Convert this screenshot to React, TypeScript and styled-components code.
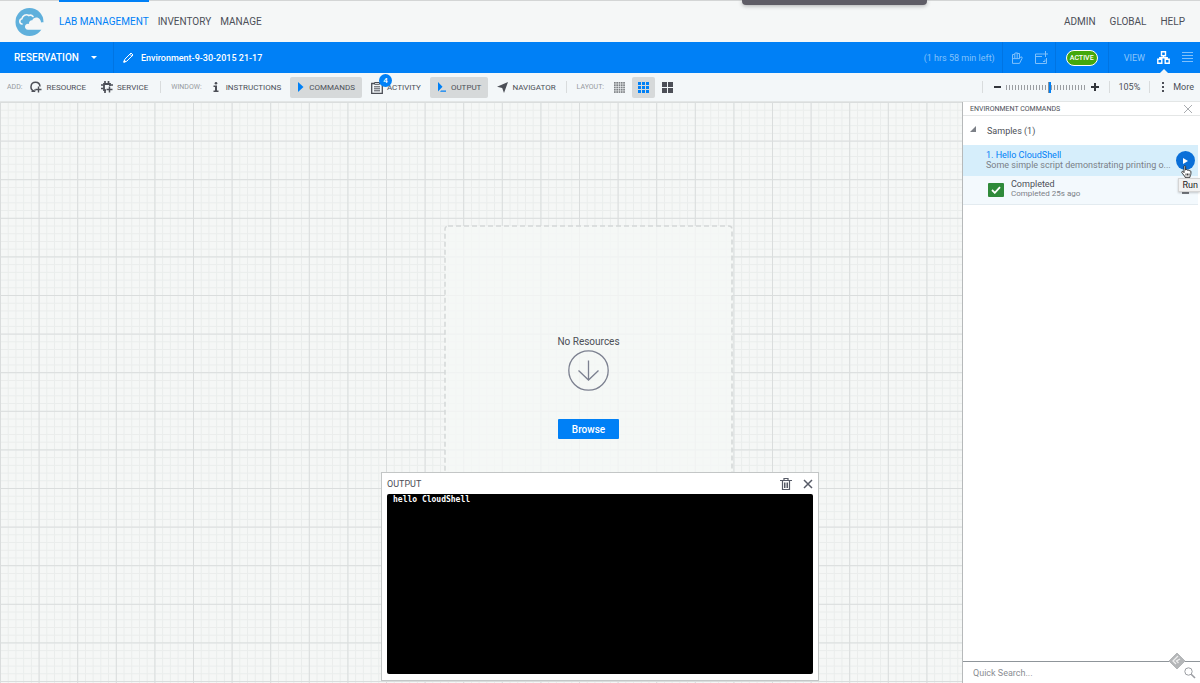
import React from "react";
import styled, { createGlobalStyle, css } from "styled-components";

const BLUE = "#0080f6";
const INK = "#4c4f57";
const SANS = `Roboto, "Liberation Sans", sans-serif`;

const GlobalStyle = createGlobalStyle`
  *, *::before, *::after { box-sizing: border-box; }
  html, body, #root { height: 100%; }
  body {
    margin: 0;
    font-family: ${SANS};
    font-size: 9px;
    color: ${INK};
    background: #f4f6f6;
    overflow: hidden;
  }
  button, input { font: inherit; color: inherit; }
  button { border: 0; background: none; padding: 0; cursor: pointer; }
  a { color: inherit; text-decoration: none; }
  svg { display: block; flex: none; }
`;

const Page = styled.div`
  display: flex;
  flex-direction: column;
  height: 100vh;
  position: relative;
`;

const ScreenNotch = styled.div`
  position: absolute;
  top: 0;
  left: 742px;
  width: 185px;
  height: 5px;
  background: #5f5d66;
  border-radius: 0 0 4px 4px;
  box-shadow: 0 1px 4px rgba(0, 0, 0, 0.3);
`;

const Header = styled.header`
  display: flex;
  align-items: stretch;
  flex: none;
  height: 42px;
  padding: 0 15px;
  background: #f5f7f7;
  border-top: 1px solid #d3d5d5;
`;

const Logo = styled.a`
  display: flex;
  align-items: center;
  margin-right: 15px;
`;

const HeaderNav = styled.nav<{ $end?: boolean }>`
  display: flex;
  gap: ${(p) => (p.$end ? 14 : 9)}px;
  margin-left: ${(p) => (p.$end ? "auto" : 0)};
`;

const HeaderLink = styled.a<{ $active?: boolean }>`
  display: flex;
  align-items: center;
  font-size: 10px;
  color: ${(p) => (p.$active ? BLUE : INK)};
  box-shadow: ${(p) => (p.$active ? `0 -1px 0 ${BLUE}, inset 0 1px 0 ${BLUE}` : "none")};
`;

const ReservationBar = styled.div`
  display: flex;
  align-items: stretch;
  flex: none;
  height: 31px;
  color: #fff;
  background: ${BLUE};
`;

const BarCell = styled.div<{ $gap?: number; $pad: string; $last?: boolean }>`
  display: flex;
  align-items: center;
  gap: ${(p) => p.$gap ?? 0}px;
  padding: ${(p) => p.$pad};
  border-right: ${(p) => (p.$last ? "0" : "1px solid #0074e2")};
`;

const ReservationMenu = styled.button`
  display: flex;
  align-items: center;
  gap: 12px;
  font-size: 10px;
  font-weight: 500;
`;

const EnvironmentName = styled.h1`
  margin: 0;
  font-size: 9px;
  font-weight: 500;
`;

const TimeLeft = styled.span`
  font-size: 9px;
  color: #84c2fb;
`;

const Spacer = styled.div`
  flex: 1;
`;

const StatusPill = styled.span`
  display: flex;
  align-items: center;
  justify-content: center;
  width: 32px;
  height: 16px;
  border: 1px solid #fff;
  border-radius: 8px;
  background: #44a80c;
  font-size: 7px;
  font-weight: 500;
`;

const ViewLabel = styled.span`
  color: #8cc6fb;
`;

const BarButton = styled.button<{ $dim?: boolean; $current?: boolean }>`
  display: flex;
  align-items: center;
  align-self: stretch;
  position: relative;
  color: ${(p) => (p.$dim ? "#7fc0fb" : "#fff")};
  ${(p) =>
    p.$current &&
    css`
      &::after {
        content: "";
        position: absolute;
        bottom: 0;
        left: 50%;
        margin-left: -4px;
        border: 4px solid transparent;
        border-top: 0;
        border-bottom-color: #f3f7f9;
      }
    `}
`;

const Toolbar = styled.div`
  display: flex;
  align-items: center;
  flex: none;
  height: 29px;
  padding: 0 6px 0 7px;
  background: #f3f7f9;
  border-bottom: 1px solid #e3e6e6;
  white-space: nowrap;
`;

const GroupLabel = styled.span`
  font-size: 7px;
  color: #96999d;
`;

const Divider = styled.span<{ $before: number; $after: number }>`
  width: 1px;
  height: 12px;
  margin: 0 ${(p) => p.$after}px 0 ${(p) => p.$before}px;
  background: #d9dcdd;
`;

const ToolButton = styled.button<{ $pressed?: boolean; $gap?: number }>`
  display: flex;
  align-items: center;
  justify-content: center;
  gap: ${(p) => p.$gap ?? 4}px;
  position: relative;
  height: 21px;
  padding: 0 7px;
  border-radius: 2px;
  background: ${(p) => (p.$pressed ? "#d6d9da" : "transparent")};
  font-size: 8px;
`;

const ToolGroup = styled.div<{ $gap: number; $inset: number }>`
  display: flex;
  gap: ${(p) => p.$gap}px;
  margin-left: ${(p) => p.$inset}px;
`;

const LayoutButton = styled(ToolButton)`
  width: 23px;
  padding: 0;
`;

const Badge = styled.span`
  position: absolute;
  top: -3px;
  left: 15px;
  width: 13px;
  height: 13px;
  border-radius: 7px;
  background: ${BLUE};
  color: #fff;
  font-size: 8px;
  font-weight: 500;
  line-height: 13px;
  text-align: center;
`;

const ZoomGroup = styled.div`
  display: flex;
  align-items: center;
  gap: 5px;
`;

const ZoomSlider = styled.input`
  appearance: none;
  width: 80px;
  height: 11px;
  margin: 0;
  background: repeating-linear-gradient(90deg, #9a9da1 0 1px, transparent 1px 3px) 0 3px / 100% 5px no-repeat;
  &::-webkit-slider-thumb {
    appearance: none;
    width: 3px;
    height: 11px;
    background: ${BLUE};
    border-left: 1px solid #8b9299;
  }
`;

const ZoomValue = styled.output`
  font-size: 9px;
`;

const MoreButton = styled.button`
  display: flex;
  align-items: center;
  gap: 9px;
`;

const Workspace = styled.div`
  display: flex;
  flex: 1;
  min-height: 0;
`;

const Canvas = styled.main`
  position: relative;
  flex: 1;
  min-width: 0;
  overflow: hidden;
`;

const EmptyZone = styled.section`
  position: absolute;
  top: 123px;
  left: 444px;
  display: flex;
  flex-direction: column;
  align-items: center;
  width: 289px;
  height: 289px;
  padding-top: 111px;
`;

const EmptyOutline = styled.svg`
  position: absolute;
  inset: 0;
`;

const EmptyTitle = styled.p`
  position: relative;
  margin: 0 0 2px;
  font-size: 10px;
  line-height: 12px;
`;

const DropIcon = styled.svg`
  position: relative;
`;

const BrowseButton = styled.button`
  position: relative;
  width: 61px;
  height: 20px;
  margin-top: 28px;
  border-radius: 1px;
  background: ${BLUE};
  color: #fff;
  font-size: 10px;
  font-weight: 500;
`;

const OutputWindow = styled.section`
  position: absolute;
  bottom: 2px;
  left: 50%;
  display: flex;
  flex-direction: column;
  width: 438px;
  height: 209px;
  margin-left: -219px;
  padding: 0 5px 6px;
  border: 1px solid #c3c6c6;
  background: #fff;
`;

const OutputHeader = styled.header`
  display: flex;
  align-items: center;
  gap: 11px;
  flex: none;
  height: 21px;
`;

const OutputTitle = styled.h2`
  flex: 1;
  margin: 0;
  font-size: 9px;
  font-weight: 400;
`;

const IconButton = styled.button`
  display: flex;
  align-items: center;
  justify-content: center;
  color: #565a66;
`;

const Terminal = styled.pre`
  flex: 1;
  margin: 0;
  padding: 0 6px;
  border-radius: 2px;
  background: #000;
  color: #fff;
  font: bold 8px/11px "DejaVu Sans Mono", monospace;
`;

const SidePanel = styled.aside`
  display: flex;
  flex-direction: column;
  flex: none;
  width: 238px;
  border-left: 1px solid #b6b9ba;
  background: #fff;
`;

const PanelHeader = styled.header`
  display: flex;
  align-items: center;
  justify-content: space-between;
  height: 14px;
  padding: 0 7px;
  border-bottom: 1px solid #e4e6e6;
`;

const PanelTitle = styled.h2`
  margin: 0;
  font-size: 7px;
  font-weight: 400;
`;

const FolderToggle = styled.button`
  display: flex;
  align-items: center;
  gap: 10px;
  height: 29px;
  padding: 0 7px;
`;

const CommandRow = styled.div<{ $selected?: boolean }>`
  display: flex;
  align-items: center;
  position: relative;
  height: ${(p) => (p.$selected ? 31 : 29)}px;
  margin-right: 2px;
  padding: 0 3px 0 ${(p) => (p.$selected ? 23 : 25)}px;
  background: ${(p) => (p.$selected ? "#d6eefb" : "#f3f9fd")};
  border-bottom: ${(p) => (p.$selected ? "0" : "1px solid #e3ebf0")};
`;

const CommandText = styled.div`
  flex: 1;
  min-width: 0;
  padding-bottom: 2px;
  line-height: 10px;
  white-space: nowrap;
`;

const CommandName = styled.div<{ $link?: boolean }>`
  color: ${(p) => (p.$link ? BLUE : INK)};
`;

const CommandDetail = styled.div<{ $small?: boolean }>`
  font-size: ${(p) => (p.$small ? 8 : 9)}px;
  color: #7b8087;
`;

const CheckTile = styled.span`
  display: flex;
  align-items: center;
  justify-content: center;
  width: 16px;
  height: 14px;
  margin-right: 7px;
  border-radius: 1px;
  background: #2f8a3a;
`;

const RunButton = styled.button`
  display: flex;
  align-items: center;
  justify-content: center;
  flex: none;
  width: 19px;
  height: 19px;
  margin-left: 4px;
  border-radius: 50%;
  background: #0a6fd8;
`;

const Pointer = styled.span`
  position: absolute;
  top: 20px;
  right: 6px;
  z-index: 2;
`;

const Tooltip = styled.span`
  position: absolute;
  top: 33px;
  right: -2px;
  z-index: 1;
  padding: 0 2px 0 4px;
  border: 1px solid #d5d5d5;
  border-right: 0;
  background: #f2f2f2;
  box-shadow: 0 1px 2px rgba(0, 0, 0, 0.2);
  color: #222;
  font-size: 9px;
  line-height: 12px;
`;

const StopButton = styled.button`
  align-self: flex-end;
  width: 7px;
  height: 6px;
  margin: 0 6px 10px 0;
  background: #777b82;
`;

const SearchBar = styled.form`
  display: flex;
  align-items: center;
  position: relative;
  height: 22px;
  margin-top: auto;
  padding: 0 4px 0 10px;
  border-top: 1px solid #8f959a;
`;

const SearchInput = styled.input`
  flex: 1;
  min-width: 0;
  padding: 0;
  border: 0;
  outline: 0;
  background: none;
  &::placeholder {
    color: #8a8d92;
    opacity: 1;
  }
`;

const CornerMark = styled.span`
  position: absolute;
  top: -10px;
  right: 14px;
`;

const GRID_MAJOR = [0, 1, 2, 3, 4].map((n) => (n * 193) / 5);
const GRID_MINOR = Array.from({ length: 25 }, (_, n) => (n * 193) / 25);

function GridLines() {
  return (
    <svg width="100%" height="100%" aria-hidden="true">
      <defs>
        <pattern id="grid" width="193" height="193" patternUnits="userSpaceOnUse">
          {GRID_MINOR.map((v) => (
            <path key={v} d={`M${v + 0.5} 0V193M0 ${v + 0.5}H193`} stroke="#eaedec" strokeWidth="1" />
          ))}
          {GRID_MAJOR.map((v) => (
            <path key={v} d={`M${v + 0.5} 0V193M0 ${v + 0.5}H193`} stroke="#dadddd" strokeWidth="1" />
          ))}
        </pattern>
      </defs>
      <rect width="100%" height="100%" fill="#f5f7f6" />
      <rect width="100%" height="100%" fill="url(#grid)" />
    </svg>
  );
}

const LogoMark = () => (
  <svg width="29" height="28" viewBox="0 0 29 28">
    <circle cx="14.5" cy="14" r="14" fill="#5fb0dc" />
    <path d="M7 16C4.200 15.500 4 11.500 6.800 10.800C7.500 7.500 11 5.800 13.800 7.500C15.500 6.800 17 7.200 18 8.500" fill="none" stroke="#f5f7f7" strokeWidth="1.600" strokeLinecap="round" />
    <path d="M29 14.500V21.800H13C10.800 21.500 9.700 20 10 18.200C10.300 16.500 12 15.500 14 16C13.800 13 15.500 12 17.300 12.200C18.500 9 23 8.600 24.800 11.200C25.800 12.500 26 13.500 26 14.500C27.500 14 28.400 14 29 14.500Z" fill="#f5f7f7" />
  </svg>
);

const PencilIcon = () => (
  <svg width="11" height="11" viewBox="0 0 11 11" fill="none" stroke="#fff" strokeWidth="1">
    <path d="M1 10L1.800 7.200L8 1L10 3L3.800 9.200ZM6.800 2.200L8.800 4.200" />
    <path d="M.7 10.300L1.400 8.200L2.800 9.600Z" fill="#fff" />
  </svg>
);

const HandIcon = () => (
  <svg width="12" height="13" viewBox="0 0 12 13" fill="none" stroke="currentColor" strokeWidth="1">
    <path d="M1.500 12.400H8.500L11 7.500V6H9.500L8.500 7.500V2.500M1.500 12.400V3.500M3.800 7.500V2M6.200 7.500V1.500M1.500 7.600H8.500M1.500 3.500H3.500M4 2H6M6.200 2.500H8.500" />
  </svg>
);

const ExtendIcon = () => (
  <svg width="13" height="13" viewBox="0 0 13 13" fill="none" stroke="currentColor" strokeWidth="1">
    <path d="M7.500 3H.5V12.500H11.500V7M.5 5.500H7M10.500 0V6M7.500 3H13M8 10.500H10V8.500" />
  </svg>
);

const DiagramIcon = () => (
  <svg width="13" height="13" viewBox="0 0 13 13" fill="none" stroke="currentColor" strokeWidth="1.400">
    <path d="M4.500 .8H8.500V4.800H4.500ZM.8 8.200H4.800V12.200H.8ZM8.200 8.200H12.200V12.200H8.200ZM6.500 5V7M2.800 8V6.700H10.200V8" />
  </svg>
);

const ListIcon = () => (
  <svg width="11" height="11" viewBox="0 0 11 11" stroke="currentColor" strokeWidth="1">
    <path d="M0 .5H11M0 3.500H11M0 6.500H11M0 9.500H11" />
  </svg>
);

const ResourceIcon = () => (
  <svg width="12" height="12" viewBox="0 0 12 12" fill="none" stroke={INK}>
    <path d="M4.500 10.200A4.500 4.500 0 1 1 10 5.500" strokeWidth="1.500" />
    <path d="M1.500 10.500H5V8" strokeWidth="1" />
    <path d="M8.500 5.500V11.500M5.500 8.500H11.500" strokeWidth="1.400" />
  </svg>
);

const ServiceIcon = () => (
  <svg width="12" height="12" viewBox="0 0 12 12" fill="none" stroke={INK}>
    <path d="M5 9.200H3V3H9V5" strokeWidth="1.800" />
    <path d="M4 0V2.500M7.500 0V2.500M0 4H2.500M0 7.500H2.500M9.500 4H12M4 9V12" strokeWidth="1.700" />
    <path d="M8.500 5.500V11.500M5.500 8.500H11.500" strokeWidth="1.500" />
  </svg>
);

const InfoIcon = () => (
  <svg width="6" height="10" viewBox="0 0 6 10" fill={INK}>
    <circle cx="3" cy="1.300" r="1.300" />
    <path d="M.5 3.500H4V8.500H5.500V10H.5V8.500H2V5H.5Z" />
  </svg>
);

const PlayIcon = () => (
  <svg width="7" height="10" viewBox="0 0 7 10" fill={BLUE}>
    <path d="M1 0L6.500 5L1 10Z" />
  </svg>
);

const ActivityIcon = () => (
  <svg width="12" height="13" viewBox="0 0 12 13" fill="none" stroke={INK}>
    <path d="M3 2.500H.7V12.300H11.300V2.500H9" strokeWidth="1.300" />
    <path d="M3.500 3.300V1.500H8.500V3.300Z" />
    <path d="M3 5.800H9M3 7.800H9M3 9.800H9" />
  </svg>
);

const ConsoleIcon = () => (
  <svg width="9" height="10" viewBox="0 0 9 10" fill={BLUE}>
    <path d="M1 0L5.500 4.800L1 9.500ZM4 8.500H9V9.700H3Z" />
  </svg>
);

const NavigatorIcon = () => (
  <svg width="11" height="11" viewBox="0 0 11 11" fill={INK}>
    <path d="M11 0L7 11L5.200 6L0 4.800Z" />
  </svg>
);

function Squares({ count, size, step, color }: { count: number; size: number; step: number; color: string }) {
  const side = Math.ceil(step * (count - 1) + size);
  return (
    <svg width={side} height={side} fill={color}>
      {Array.from({ length: count * count }, (_, i) => (
        <rect key={i} x={(i % count) * step} y={Math.floor(i / count) * step} width={size} height={size} />
      ))}
    </svg>
  );
}

export default function App() {
  return (
    <>
      <GlobalStyle />
      <Page>
        <Header>
          <Logo href="#" aria-label="Home"><LogoMark /></Logo>
          <HeaderNav>
            <HeaderLink href="#" $active>LAB MANAGEMENT</HeaderLink>
            <HeaderLink href="#">INVENTORY</HeaderLink>
            <HeaderLink href="#">MANAGE</HeaderLink>
          </HeaderNav>
          <HeaderNav $end>
            <HeaderLink href="#">ADMIN</HeaderLink>
            <HeaderLink href="#">GLOBAL</HeaderLink>
            <HeaderLink href="#">HELP</HeaderLink>
          </HeaderNav>
        </Header>
        <ScreenNotch />

        <ReservationBar>
          <BarCell $pad="0 16px 0 14px">
            <ReservationMenu>
              RESERVATION
              <svg width="6" height="3" fill="#fff"><path d="M0 0H6L3 3Z" /></svg>
            </ReservationMenu>
          </BarCell>
          <BarCell $pad="0 9px" $gap={7} $last>
            <PencilIcon />
            <EnvironmentName>Environment-9-30-2015 21-17</EnvironmentName>
          </BarCell>
          <Spacer />
          <BarCell $pad="0 7px"><TimeLeft>(1 hrs 58 min left)</TimeLeft></BarCell>
          <BarCell $pad="0 7px 0 8px" $gap={12}>
            <BarButton $dim aria-label="Reserve"><HandIcon /></BarButton>
            <BarButton $dim aria-label="Extend"><ExtendIcon /></BarButton>
          </BarCell>
          <BarCell $pad="0 10px"><StatusPill>ACTIVE</StatusPill></BarCell>
          <BarCell $pad="0 7px 0 15px" $gap={12} $last>
            <ViewLabel>VIEW</ViewLabel>
            <BarButton $current aria-label="Diagram view"><DiagramIcon /></BarButton>
            <BarButton $dim aria-label="List view"><ListIcon /></BarButton>
          </BarCell>
        </ReservationBar>

        <Toolbar>
          <GroupLabel>ADD:</GroupLabel>
          <ToolGroup $gap={1} $inset={1}>
            <ToolButton><ResourceIcon />RESOURCE</ToolButton>
            <ToolButton><ServiceIcon />SERVICE</ToolButton>
          </ToolGroup>
          <Divider $before={5} $after={10} />
          <GroupLabel>WINDOW:</GroupLabel>
          <ToolGroup $gap={2} $inset={4}>
            <ToolButton $gap={7}><InfoIcon />INSTRUCTIONS</ToolButton>
            <ToolButton $gap={5} $pressed><PlayIcon />COMMANDS</ToolButton>
            <ToolButton><ActivityIcon />ACTIVITY<Badge>4</Badge></ToolButton>
            <ToolButton $gap={5} $pressed><ConsoleIcon />OUTPUT</ToolButton>
            <ToolButton><NavigatorIcon />NAVIGATOR</ToolButton>
          </ToolGroup>
          <Divider $before={3} $after={10} />
          <GroupLabel>LAYOUT:</GroupLabel>
          <ToolGroup $gap={1} $inset={4}>
            <LayoutButton aria-label="Small layout"><Squares count={5} size={1.7} step={2.3} color="#7d8084" /></LayoutButton>
            <LayoutButton $pressed aria-label="Medium layout"><Squares count={3} size={3} step={4} color={BLUE} /></LayoutButton>
            <LayoutButton aria-label="Large layout"><Squares count={2} size={5} step={6} color={INK} /></LayoutButton>
          </ToolGroup>
          <Spacer />
          <Divider $before={0} $after={11} />
          <ZoomGroup>
            <IconButton aria-label="Zoom out"><svg width="7" height="8" fill="#33363c"><path d="M0 3H7V5H0Z" /></svg></IconButton>
            <ZoomSlider type="range" min={0} max={200} defaultValue={108} aria-label="Zoom" />
            <IconButton aria-label="Zoom in"><svg width="8" height="8" fill="#33363c"><path d="M3 0H5V3H8V5H5V8H3V5H0V3H3Z" /></svg></IconButton>
          </ZoomGroup>
          <Divider $before={10} $after={8} />
          <ZoomValue>105%</ZoomValue>
          <Divider $before={9} $after={12} />
          <MoreButton>
            <svg width="2" height="10" fill={INK}><path d="M0 0H2V2H0ZM0 4H2V6H0ZM0 8H2V10H0Z" /></svg>
            More
          </MoreButton>
        </Toolbar>

        <Workspace>
          <Canvas>
            <GridLines />
            <EmptyZone>
              <EmptyOutline width="289" height="289" aria-hidden="true">
                <rect x="1" y="1" width="287" height="287" rx="3" fill="#f5f7f6" fillOpacity="0.8" stroke="#d4d7d7" strokeWidth="1.500" strokeDasharray="5 3" />
              </EmptyOutline>
              <EmptyTitle>No Resources</EmptyTitle>
              <DropIcon width="41" height="41" fill="none" stroke="#7c8090" strokeWidth="1.300">
                <circle cx="20.5" cy="20.5" r="19.700" />
                <path d="M20.500 10.500V30M10.500 20.500L20.500 30L30.500 20.500" />
              </DropIcon>
              <BrowseButton>Browse</BrowseButton>
            </EmptyZone>
          </Canvas>

          <SidePanel>
            <PanelHeader>
              <PanelTitle>ENVIRONMENT COMMANDS</PanelTitle>
              <IconButton aria-label="Close commands">
                <svg width="10" height="10" stroke="#a9acb0"><path d="M1 1L9 9M9 1L1 9" /></svg>
              </IconButton>
            </PanelHeader>
            <FolderToggle>
              <svg width="7" height="9" fill="#7c8087"><path d="M6 0V6H0Z" /></svg>
              Samples (1)
            </FolderToggle>
            <CommandRow $selected>
              <CommandText>
                <CommandName $link>1. Hello CloudShell</CommandName>
                <CommandDetail>Some simple script demonstrating printing o...</CommandDetail>
              </CommandText>
              <RunButton aria-label="Run command">
                <svg width="5" height="6" fill="#fff"><path d="M0 0L5 3L0 6Z" /></svg>
              </RunButton>
              <Tooltip role="tooltip">Run</Tooltip>
              <Pointer>
                <svg width="11" height="13" viewBox="0 0 11 13" fill="#fff" stroke="#222" strokeWidth="0.900">
                  <path d="M3 7V1.500C3 .4 4.600 .4 4.600 1.500V5C5 4.200 6.300 4.400 6.300 5.300C6.900 4.600 8 5 8 5.900C8.700 5.300 9.900 5.700 9.900 6.700V8.500C9.900 10 9 10.500 9 12.300H4C4 11 1.500 9 .8 7.500C.5 6.400 1.700 6 2.300 6.700L3 7.600ZM5 8.500V10.500M6.500 8.500V10.500M8 8.500V10.500" />
                </svg>
              </Pointer>
            </CommandRow>
            <CommandRow>
              <CheckTile>
                <svg width="10" height="8" fill="none" stroke="#fff" strokeWidth="1.800"><path d="M1 4L3.800 6.800L9 1.200" /></svg>
              </CheckTile>
              <CommandText>
                <CommandName>Completed</CommandName>
                <CommandDetail $small>Completed 25s ago</CommandDetail>
              </CommandText>
              <StopButton aria-label="Clear result" />
            </CommandRow>
            <SearchBar>
              <SearchInput type="text" placeholder="Quick Search..." aria-label="Quick Search" />
              <IconButton type="button" aria-label="Search">
                <svg width="12" height="12" fill="none" stroke="#9a9da2"><circle cx="4.500" cy="4.500" r="3.700" /><path d="M7.200 7.200L11 11" strokeWidth="1.600" /></svg>
              </IconButton>
              <CornerMark>
                <svg width="18" height="18" viewBox="0 0 18 18">
                  <path d="M9 1L17 9L9 17L1 9Z" fill="#b4b6b8" stroke="#b4b6b8" strokeLinejoin="round" />
                  <path d="M10 4L5 9L8 12M12 7L8.500 9L10.500 11" fill="none" stroke="#eee" strokeWidth="1.300" />
                </svg>
              </CornerMark>
            </SearchBar>
          </SidePanel>
        </Workspace>

        <OutputWindow>
          <OutputHeader>
            <OutputTitle>OUTPUT</OutputTitle>
            <IconButton aria-label="Clear output">
              <svg width="12" height="12" fill="none" stroke="currentColor"><path d="M0 2.500H12M4 2V.5H8V2M2.500 3V11.500H9.500V3" strokeWidth="1.200" /><path d="M4.500 4.500V10M6 4.500V10M7.500 4.500V10" /></svg>
            </IconButton>
            <IconButton aria-label="Close output">
              <svg width="10" height="10" stroke="currentColor" strokeWidth="1.500"><path d="M1 1L9 9M9 1L1 9" /></svg>
            </IconButton>
          </OutputHeader>
          <Terminal>hello CloudShell</Terminal>
        </OutputWindow>
      </Page>
    </>
  );
}
